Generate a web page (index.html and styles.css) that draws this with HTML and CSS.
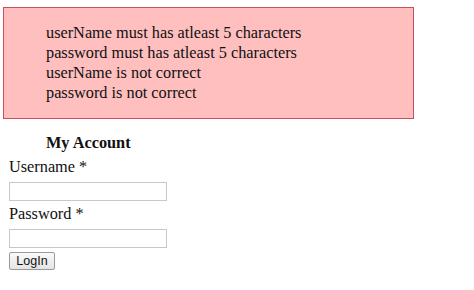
FILE: index.html
```html
<!DOCTYPE html>
<html>
<head>
<meta charset="utf-8">
<link rel="stylesheet" href="styles.css">
</head>
<body>
<div class="errors">
  <div class="error-line">userName must has atleast 5 characters</div>
  <div class="error-line">password must has atleast 5 characters</div>
  <div class="error-line">userName is not correct</div>
  <div class="error-line">password is not correct</div>
</div>
<form class="account">
  <div class="title">My Account</div>
  <label class="label">Username *</label>
  <input class="field" type="text">
  <label class="label">Password *</label>
  <input class="field" type="password">
  <button class="btn" type="button">LogIn</button>
</form>
</body>
</html>
```
FILE: styles.css
```css
html, body {
  margin: 0;
  padding: 0;
  background: #fff;
}
body {
  font-family: "Liberation Serif", "Times New Roman", serif;
  font-size: 16.3px;
  color: #111;
}
.errors {
  margin: 7px 0 0 3px;
  width: 367px;
  background: #ffbfbf;
  border: 1px solid #c55060;
  padding: 15px 0 15px 42px;
}
.error-line {
  line-height: 20px;
}
.account {
  display: flex;
  flex-direction: column;
  align-items: flex-start;
  padding: 14px 0 0 9px;
}
.title {
  font-weight: bold;
  font-size: 16.3px;
  line-height: 20px;
  margin-left: 37px;
}
.label {
  font-size: 16.3px;
  line-height: 24px;
}
.title + .label {
  margin-top: 2px;
}
.field {
  box-sizing: border-box;
  width: 158px;
  height: 19px;
  margin: 3px 0 1px 0;
  border: 1px solid #c8c8c8;
  padding: 0;
  background: #fff;
}
.btn {
  box-sizing: border-box;
  width: 46px;
  height: 18px;
  margin-top: 3px;
  padding: 0;
  font-family: "Liberation Sans", Arial, sans-serif;
  font-size: 12.5px;
  font-weight: 500;
  color: #111;
  background: linear-gradient(#fafafa, #e4e4e4);
  border: 1px solid #9a9a9a;
  border-radius: 2px;
}
```
